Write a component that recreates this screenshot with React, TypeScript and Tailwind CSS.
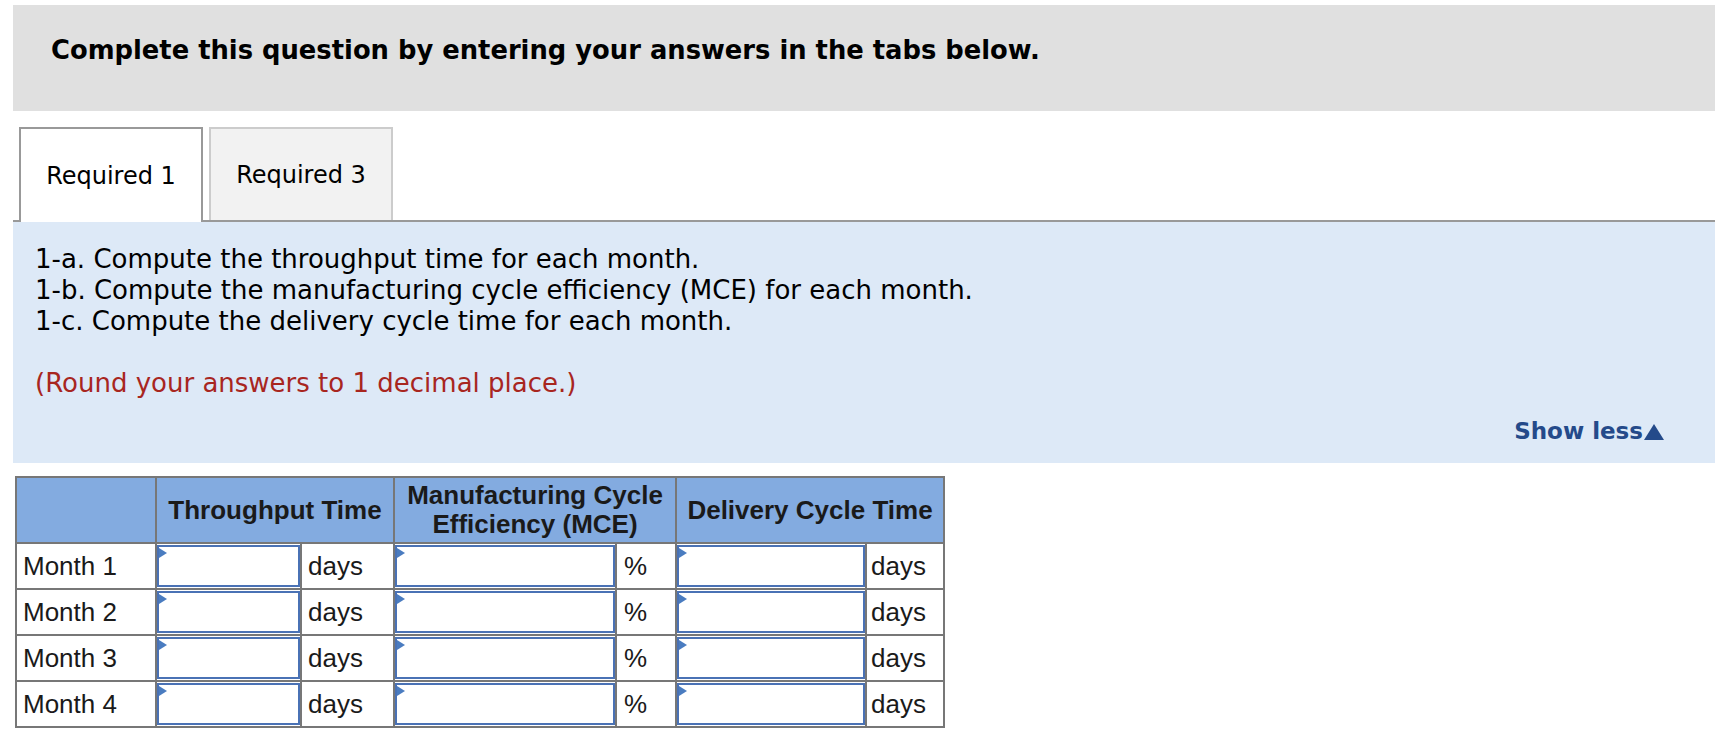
const verdana = "font-['DejaVu_Sans',Verdana,sans-serif]";
const arial = "font-['Liberation_Sans',Arial,sans-serif]";

const MONTHS = ['Month 1', 'Month 2', 'Month 3', 'Month 4'];

function AnswerInput({ label }: { label: string }) {
  return (
    <div className="relative h-[42px] w-full border-2 border-[#4a72b5] bg-white">
      <span className="absolute left-0 top-[1px] h-0 w-0 border-y-[5px] border-l-[8px] border-y-transparent border-l-[#4a7cc0]" />
      <input
        aria-label={label}
        className="h-full w-full bg-transparent px-2 text-[22px] outline-none"
      />
    </div>
  );
}

export default function App() {
  return (
    <div className="min-h-screen bg-white pl-[13px] pr-[11px] pt-[5px]">
      {/* Instruction banner */}
      <div className="h-[106px] bg-[#e0e0e0] pl-[38px] pt-[30px]">
        <h2 className={`${verdana} text-[25.8px] font-bold leading-[30px] text-black`}>
          Complete this question by entering your answers in the tabs below.
        </h2>
      </div>

      {/* Tabs */}
      <div className="mt-[16px] flex items-end border-b-2 border-[#999] pl-[6px]">
        <button
          type="button"
          className={`${verdana} relative -mb-[2px] flex h-[95px] w-[184px] items-center justify-center border-2 border-b-0 border-[#999] bg-white text-[24px] text-black`}
        >
          Required 1
        </button>
        <button
          type="button"
          className={`${verdana} ml-[6px] flex h-[93px] w-[184px] items-center justify-center border-2 border-b-0 border-[#ccc] bg-[#f2f2f2] text-[24px] text-black`}
        >
          Required 3
        </button>
      </div>

      {/* Question panel */}
      <div className={`${verdana} h-[241px] bg-[#dde9f7] pl-[22px] pr-[51px] pt-[22px] text-[26px] leading-[31px] text-black`}>
        <p>1-a. Compute the throughput time for each month.</p>
        <p>1-b. Compute the manufacturing cycle efficiency (MCE) for each month.</p>
        <p>1-c. Compute the delivery cycle time for each month.</p>
        <p className="mt-[31px] text-[#a8261f]">(Round your answers to 1 decimal place.)</p>
        <div className="mt-[17px] flex justify-end">
          <button type="button" className="flex items-center text-[23px] font-bold leading-[31px] text-[#244a8a]">
            Show less
            <svg viewBox="0 0 20 16" className="ml-[1px] h-[16px] w-[20px]" aria-hidden="true">
              <path d="M10 0 L20 16 L0 16 Z" fill="#244a8a" />
            </svg>
          </button>
        </div>
      </div>

      {/* Answer table */}
      <table className={`${arial} ml-[2px] mt-[13px] w-[928px] table-fixed border-collapse border-2 border-[#777] text-[26px] text-[#1a1a1a]`}>
        <colgroup>
          <col className="w-[140px]" />
          <col className="w-[145px]" />
          <col className="w-[93px]" />
          <col className="w-[222px]" />
          <col className="w-[60px]" />
          <col className="w-[190px]" />
          <col className="w-[78px]" />
        </colgroup>
        <thead>
          <tr className="h-[66px] bg-[#83abe0]">
            <th className="border-2 border-[#777]" />
            <th colSpan={2} className="border-2 border-[#777] font-bold leading-[29px]">
              Throughput Time
            </th>
            <th colSpan={2} className="border-2 border-[#777] font-bold leading-[29px]">
              Manufacturing Cycle
              <br />
              Efficiency (MCE)
            </th>
            <th colSpan={2} className="border-2 border-[#777] font-bold leading-[29px]">
              Delivery Cycle Time
            </th>
          </tr>
        </thead>
        <tbody>
          {MONTHS.map((m) => (
            <tr key={m} className="h-[46px]">
              <td className="border-2 border-[#777] pl-[6px] leading-[30px]">{m}</td>
              <td className="border-2 border-[#777] p-0">
                <AnswerInput label={`${m} throughput time`} />
              </td>
              <td className="border-2 border-[#777] pl-[6px] leading-[30px]">days</td>
              <td className="border-2 border-[#777] p-0">
                <AnswerInput label={`${m} MCE`} />
              </td>
              <td className="border-2 border-[#777] pl-[7px] leading-[30px]">%</td>
              <td className="border-2 border-[#777] p-0">
                <AnswerInput label={`${m} delivery cycle time`} />
              </td>
              <td className="border-2 border-[#777] pl-[4px] leading-[30px]">days</td>
            </tr>
          ))}
        </tbody>
      </table>
    </div>
  );
}
